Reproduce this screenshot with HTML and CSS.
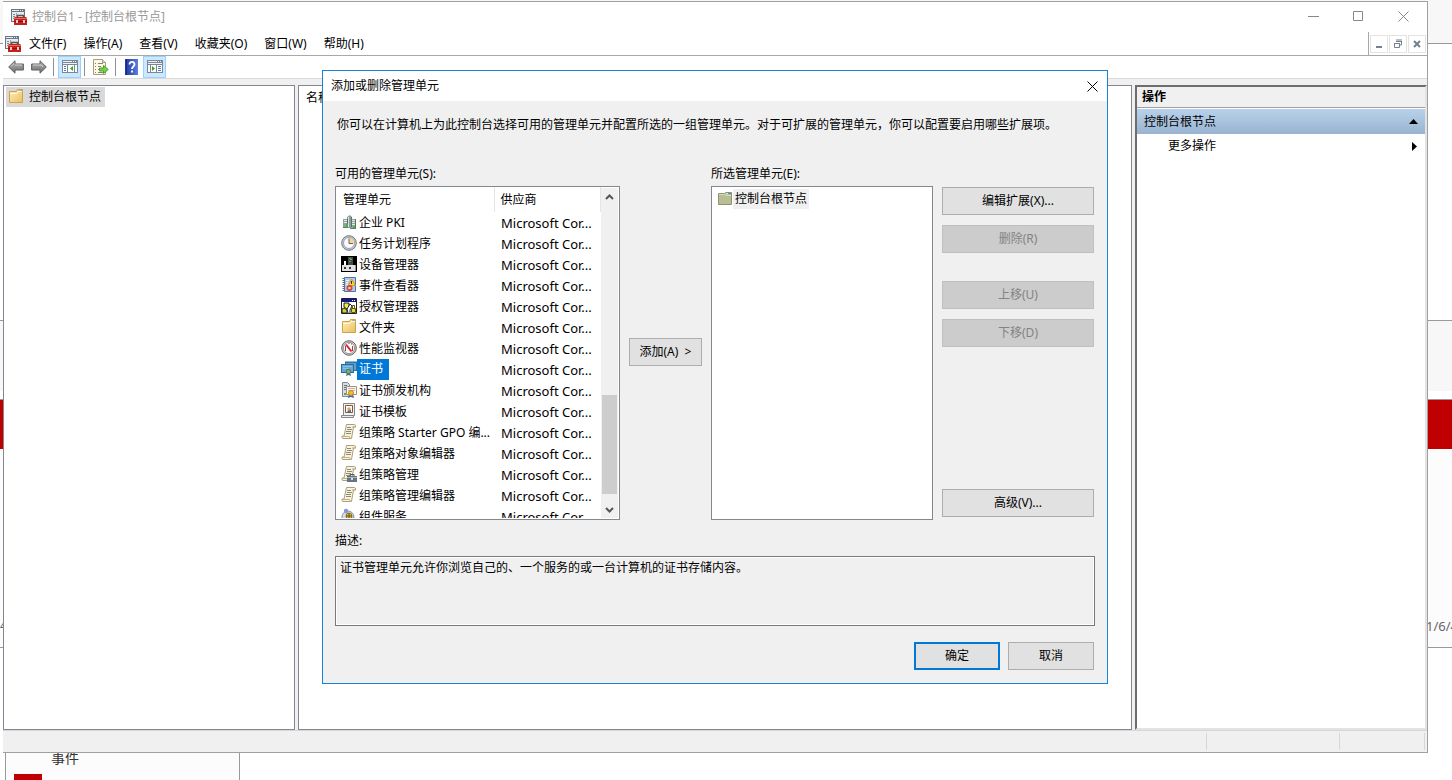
FILE: index.html
```
<!DOCTYPE html>
<html lang="zh-CN">
    <head>
        <title>控制台1 - [控制台根节点]</title>
        <meta charset="UTF-8">
        <meta name="viewport" content="width=device-width, initial-scale=1.0">
        <link rel="stylesheet" href="styles.css">
    </head>
    <body>
        <!-- icon set -->
        <svg class="defs" width="0" height="0">
            <defs>
                <linearGradient id="gFolder" x1="0" y1="0" x2="1" y2="1">
                    <stop offset="0" stop-color="#fff0b8"/><stop offset="1" stop-color="#e8bf63"/>
                </linearGradient>
                <linearGradient id="gArrow" x1="0" y1="0" x2="0" y2="1">
                    <stop offset="0" stop-color="#b5b5b5"/><stop offset="1" stop-color="#6e6e6e"/>
                </linearGradient>
                <linearGradient id="gHelp" x1="0" y1="0" x2="1" y2="0">
                    <stop offset="0" stop-color="#23379b"/><stop offset="1" stop-color="#5b7de0"/>
                </linearGradient>
            </defs>
            <symbol id="mmc" viewBox="0 0 16 16">
                <path d="M0 0h14v13H0z" fill="#6c7783"/><path d="M1 4h12v8H1z" fill="#e6e9ee"/>
                <path d="M1 1.500h7M9 1.500h1M11 1.500h1M1 3.500h12" stroke="#e8edf2"/>
                <path d="M2 5.500h2M2 7.500h2M2 9.500h1" stroke="#7b8794"/><path d="M5.500 4v5" stroke="#9aa4ae"/>
                <path d="M6.500 9V6.500h6V9" fill="none" stroke="#555" stroke-width="1.500"/>
                <path d="M3 9l1-1h11l1 1v7H3z" fill="#c7211d"/>
                <path d="M3 9.500h13" stroke="#ea6a5b"/><path d="M3 12.500h13" stroke="#8f1110"/>
                <path d="M5 11h2v3H5zM12 11h2v3h-2z" fill="#f1d0ca"/>
            </symbol>
            <symbol id="folder" viewBox="0 0 16 16">
                <path d="M1.500 2.500h7l1-2h5v13h-13z" fill="url(#gFolder)" stroke="#cfa14b"/>
                <path d="M2 4.500h7l1-2h4" fill="none" stroke="#fff7d6"/><path d="M11 1.500h3" stroke="#8fb4d6"/>
            </symbol>
            <symbol id="folder-green" viewBox="0 0 16 16">
                <path d="M1.500 2.500h6l1-1h6v12h-13z" fill="#b9bd93" stroke="#8b9572"/>
                <path d="M2 3.500h6l1 1h5" fill="none" stroke="#d5dab8"/><path d="M9 2.500h2" stroke="#dfeaf2"/><path d="M11 2.500h3" stroke="#3d8fe0"/>
            </symbol>
            <symbol id="back" viewBox="0 0 16 14">
                <path d="M.7 7 7 .8V4h8.400v6H7v3.200z" fill="url(#gArrow)" stroke="#606060"/><path d="M3 6.500l3-3M7 5h7" stroke="#d2d2d2" fill="none"/>
            </symbol>
            <symbol id="forward" viewBox="0 0 16 14">
                <path d="M15.300 7 9 .8V4H.6v6H9v3.200z" fill="url(#gArrow)" stroke="#606060"/><path d="M2 5h8l2 2" stroke="#d2d2d2" fill="none"/>
            </symbol>
            <symbol id="tree-on" viewBox="0 0 16 14">
                <path d="M0 0h16v13H0z" fill="#7b8794"/><path d="M1 5h4v7H1zM6 5h6v7H6zM13 5h2v7h-2z" fill="#fff"/>
                <path d="M1 1.500h9M11 1.500h1M13 1.500h1M1 3.500h14" stroke="#eef2f6"/>
                <path d="M2 6.500h2M2 8.500h2M2 10.500h2" stroke="#507ba8"/>
                <path d="M11 6v5L8 8.500z" fill="#36a820"/>
            </symbol>
            <symbol id="pane-on" viewBox="0 0 16 14">
                <path d="M0 0h16v13H0z" fill="#7b8794"/><path d="M1 5h2v7H1zM4 5h5v7H4zM10 5h5v7h-5z" fill="#fff"/>
                <path d="M1 1.500h9M11 1.500h1M13 1.500h1M1 3.500h14" stroke="#eef2f6"/>
                <path d="M11 6.500h3M11 8.500h3M11 10.500h3" stroke="#507ba8"/>
                <path d="M5 6v5l3-2.500z" fill="#36a820"/>
            </symbol>
            <symbol id="export" viewBox="0 0 16 16">
                <path d="M.5.5h9l3 3v12H.5z" fill="#fdf8de" stroke="#a79c77"/><path d="M9.500.5v3h3" fill="#e8dcae" stroke="#a79c77"/>
                <path d="M5 4.500h5M5 7.500h3M5 10.500h2M5 13.500h5M2 4.500h1M2 7.500h1M2 10.500h1M2 13.500h1" stroke="#807ab0"/>
                <path d="M6.500 9h4V6.500L15.300 10.500l-4.800 4V12h-4z" fill="#74d04b" stroke="#48a62d"/>
            </symbol>
            <symbol id="help" viewBox="0 0 13 16">
                <path d="M0 0h13v16H0z" fill="url(#gHelp)"/><path d="M1.500 0v16" stroke="#1a2b83"/>
                <path d="M4.500 5.500c0-3.500 5-3.500 5 0 0 2-2.500 2-2.500 4.500M7 11.500v2" fill="none" stroke="#fff" stroke-width="1.800"/>
            </symbol>
            <symbol id="pki" viewBox="0 0 16 16">
                <path d="M6 3l3-2 2 2v11H6z" fill="#8c9e9e"/><path d="M7.500 3v10" stroke="#d7e1df"/>
                <path d="M2 5h5v9l-5-1z" fill="#8fa29d"/><path d="M10 5h5v10l-5-1z" fill="#93a5a0"/>
                <path d="M3 6.500h3M3 8.500h3M11 6.500h3M11 8.500h3M11 10.500h3" stroke="#e2ebe8"/>
                <path d="M6.500 5v9M14.500 5v9M10.500 3v10" stroke="#5e6f6b"/><path d="M5 10h2v3H5zM12 12h2v2h-2z" fill="#3fbf2c"/><path d="M2 13.500h5M9 14.500h6" stroke="#687975"/>
            </symbol>
            <symbol id="clock" viewBox="0 0 16 16">
                <circle cx="8" cy="8" r="7.300" fill="#c3c7cc" stroke="#747981"/><circle cx="8" cy="8" r="5.500" fill="#f7faff" stroke="#9da6af"/>
                <path d="M8 3a5 5 0 0 1 5 5H8z" fill="#f9d391"/><path d="M8 3.500V8.500h4" fill="none" stroke="#6a6259"/>
            </symbol>
            <symbol id="device" viewBox="0 0 16 16">
                <path d="M0 0h16v16H0z" fill="#000"/><path d="M7 1h5v8H7z" fill="#4a4a4a"/><path d="M8 2h2v1H8zM8 5h2v1H8z" fill="#888"/><path d="M9 3h2v1H9z" fill="#32d532"/>
                <path d="M3 5h2v4H3z" fill="#fff"/><path d="M1 9h14v6H1z" fill="#e2e2e2"/><path d="M3 11h2v2H3zM8 11h2v2H8z" fill="#333"/><path d="M14 9h1v6h-1z" fill="#999"/>
            </symbol>
            <symbol id="event" viewBox="0 0 16 16">
                <path d="M3.500.5h11v14h-11z" fill="#b3c9e4" stroke="#4d74a8"/><path d="M2.500 1v13" stroke="#5b6b7c" stroke-width="2" stroke-dasharray="1 1"/>
                <path d="M5 3.500h3M5 5.500h2M5 7.500h2" stroke="#eef5fc"/><path d="M10.500 2l4 6.500h-7z" fill="#ffd531" stroke="#d09d17"/><path d="M10.500 4v3" stroke="#333"/>
                <circle cx="8.500" cy="11" r="3" fill="#d9463c"/><path d="M7.500 10l2 2m0-2l-2 2" stroke="#fff"/>
            </symbol>
            <symbol id="auth" viewBox="0 0 16 16">
                <path d="M.5.5h15v15H.5z" fill="#fff" stroke="#222"/><path d="M1 1h14v3H1z" fill="#15158c"/><path d="M11 2.500h1M13 2.500h1" stroke="#fff"/>
                <path d="M3 5h5v5l-2 1-3-2z" fill="#f3ee3d" stroke="#222"/><path d="M1 15v-4l2-1 3 2v3z" fill="#d4cf28" stroke="#222"/>
                <path d="M7 15l-1-4 3-5 2 2-2 4v3" fill="#fff" stroke="#222"/><path d="M10.500 10.500h4v4h-4z" fill="#e3d926" stroke="#59590c"/><path d="M11.500 10V7.500h2V10" fill="none" stroke="#59590c"/>
            </symbol>
            <symbol id="gauge" viewBox="0 0 16 16">
                <circle cx="8" cy="8" r="7.300" fill="#c9c9c9" stroke="#686868"/><circle cx="8" cy="8" r="5.600" fill="#fff" stroke="#999"/>
                <path d="M4.500 11V6M11.500 11V6M8 4V3M10 4h1" stroke="#9e3f49"/><path d="M5 4.500l5.500 7" stroke="#dc202c" stroke-width="2"/>
            </symbol>
            <symbol id="cert" viewBox="0 0 16 16">
                <path d="M4 .5h12V10H4z" fill="#2f739f"/><path d="M5 2h10v7H5z" fill="#5a9fd0"/>
                <path d="M0 3h13v9H0z" fill="#2b6b99"/><path d="M1 4h11v7H1z" fill="#61a7d8"/>
                <path d="M2 5.500h9M2 7.500h6" stroke="#88c1e8"/><path d="M6 11l-1 4 2.500-1 2.500 1-1-4" fill="#2f789c"/><circle cx="7.500" cy="10.500" r="2.300" fill="#8ca06a" stroke="#4f7660"/>
            </symbol>
            <symbol id="ca" viewBox="0 0 16 16">
                <path d="M1.500.5h5l2 2v12h-7z" fill="#d6dce0" stroke="#7f898f"/><path d="M3 3.500h3M3 5.500h3M3 7.500h2" stroke="#657178"/><path d="M3 11h2v2H3z" fill="#49ad42"/>
                <path d="M5.500 4.500h10v8h-10z" fill="#fff8ea" stroke="#a98c7a"/><path d="M7 6.500h7M7 8.500h7" stroke="#b6b6b6"/><path d="M8 12l-1 4 3-1 3 1-1-4" fill="#396aad"/><circle cx="10" cy="11" r="2.500" fill="#f5bd2d" stroke="#c58a18"/>
            </symbol>
            <symbol id="template" viewBox="0 0 16 16">
                <path d="M2.500.5h11v12h-11z" fill="#f3f1ec" stroke="#8a8580"/><path d="M4.500 2.500h7v7h-7z" fill="#fff" stroke="#755b4e"/><path d="M.5 12.500h12v2H.5z" fill="#eee" stroke="#8a8580"/>
                <path d="M7 7l-1 3 2-1 2 1V7" fill="#41709f"/><circle cx="8" cy="6" r="1.800" fill="#eaa43a"/>
            </symbol>
            <symbol id="scroll" viewBox="0 0 16 16">
                <path d="M5.500.5h8q1.500 0 1 2.500h-2l-2 11.500H2Q.5 14.500 1 12h2z" fill="#faf3d9" stroke="#aaa07f"/>
                <path d="M11 3h3.500M1.500 12.500h7l1 2" fill="none" stroke="#c0b086"/>
                <path d="M6 3.500h4M6 5.500h5M5 7.500h5M5 9.500h5" stroke="#8d8a7b"/>
            </symbol>
            <symbol id="scroll-lock" viewBox="0 0 16 16">
                <use href="#scroll"/><path d="M6 10h10v6H6z" fill="#66747e"/><path d="M9 10V8.500h4V10" fill="none" stroke="#4b5962"/><path d="M6 11.500h10" stroke="#a8b7c0"/><path d="M10 12h2v2h-2z" fill="#d6dee3"/>
            </symbol>
            <symbol id="component" viewBox="0 0 16 16">
                <circle cx="7" cy="9" r="6" fill="#d5dbea" stroke="#8993ac"/><circle cx="5" cy="3" r="2.200" fill="#8993df"/><circle cx="12" cy="12" r="2.500" fill="#63ad51"/>
                <circle cx="8" cy="8" r="3" fill="#eaba37" stroke="#987320"/><path d="M8 5v6M5 8h6" stroke="#5e4e23"/>
            </symbol>
        </svg>

        <!-- page behind the console -->
        <div class="behind">
            <div class="band band-top"></div>
            <div class="band band-blank"></div>
            <div class="band band-grey"></div>
            <div class="band band-red"></div>
            <div class="band band-date"><span>4</span><span class="date">1/6/4</span></div>
            <div class="events"><span>事件</span><div class="events-mark"></div></div>
        </div>

        <div class="console">
            <div class="titlebar">
                <svg class="icon"><use href="#mmc"/></svg>
                <span class="caption">控制台1 - [控制台根节点]</span>
                <button class="sysbtn" aria-label="最小化"><svg width="11" height="11"><path d="M0 5.500h11"/></svg></button>
                <button class="sysbtn" aria-label="最大化"><svg width="11" height="11"><path d="M.5.5h9v9h-9z"/></svg></button>
                <button class="sysbtn" aria-label="关闭"><svg width="11" height="11"><path d="M.5.5l10 10M10.500.5l-10 10"/></svg></button>
            </div>
            <div class="menubar">
                <svg class="icon"><use href="#mmc"/></svg>
                <div class="menus">
                    <button>文件(F)</button>
                    <button>操作(A)</button>
                    <button>查看(V)</button>
                    <button>收藏夹(O)</button>
                    <button>窗口(W)</button>
                    <button>帮助(H)</button>
                </div>
                <div class="mdi">
                    <button aria-label="最小化"><svg width="10" height="10"><path d="M2 8h6" stroke-width="2"/></svg></button>
                    <button aria-label="还原"><svg width="10" height="10"><path d="M3 1h6M3 2.500h6M8.500 2v4H7M1 4.500h6M1.500 4v4.500h5V4" stroke-width="1"/></svg></button>
                    <button aria-label="关闭"><svg width="10" height="10"><path d="M2 2l6 6M8 2l-6 6" stroke-width="2"/></svg></button>
                </div>
            </div>
            <div class="toolbar">
                <button aria-label="后退"><svg width="16" height="14"><use href="#back"/></svg></button>
                <button aria-label="前进"><svg width="16" height="14"><use href="#forward"/></svg></button>
                <i class="sep"></i>
                <button class="pressed" aria-label="显示控制台树"><svg width="16" height="14"><use href="#tree-on"/></svg></button>
                <i class="sep"></i>
                <button aria-label="导出列表"><svg width="16" height="16"><use href="#export"/></svg></button>
                <i class="sep"></i>
                <button aria-label="帮助"><svg width="13" height="16"><use href="#help"/></svg></button>
                <button class="pressed" aria-label="显示操作窗格"><svg width="16" height="14"><use href="#pane-on"/></svg></button>
            </div>
            <div class="panes">
                <div class="pane tree">
                    <button class="node"><svg class="icon"><use href="#folder"/></svg><span>控制台根节点</span></button>
                </div>
                <div class="pane result">名称</div>
                <div class="pane actions">
                    <h2>操作</h2>
                    <button class="group"><span>控制台根节点</span><svg width="9" height="5"><path d="M0 5h9L4.500 0z"/></svg></button>
                    <button class="more"><span>更多操作</span><svg width="5" height="9"><path d="M0 0v9l5-4.500z"/></svg></button>
                </div>
            </div>
            <div class="statusbar"><span></span><span></span><span></span></div>
        </div>

        <div class="dialog" role="dialog" aria-labelledby="dlgTitle">
            <div class="dlg-title">
                <span id="dlgTitle">添加或删除管理单元</span>
                <button aria-label="关闭"><svg width="11" height="11"><path d="M.5.5l10 10M10.500.5l-10 10"/></svg></button>
            </div>
            <div class="dlg-body">
                <p class="intro">你可以在计算机上为此控制台选择可用的管理单元并配置所选的一组管理单元。对于可扩展的管理单元，你可以配置要启用哪些扩展项。</p>
                <div class="picker">
                    <div>
                        <div class="label" id="lblAvail">可用的管理单元(S):</div>
                        <div class="listbox">
                            <div class="rows">
                                <table aria-labelledby="lblAvail">
                                    <thead>
                                        <tr><th class="name">管理单元</th><th>供应商</th></tr>
                                    </thead>
                                    <tbody>
                                        <tr><td><svg class="icon"><use href="#pki"/></svg><span>企业 PKI</span></td><td>Microsoft Cor...</td></tr>
                                        <tr><td><svg class="icon"><use href="#clock"/></svg><span>任务计划程序</span></td><td>Microsoft Cor...</td></tr>
                                        <tr><td><svg class="icon"><use href="#device"/></svg><span>设备管理器</span></td><td>Microsoft Cor...</td></tr>
                                        <tr><td><svg class="icon"><use href="#event"/></svg><span>事件查看器</span></td><td>Microsoft Cor...</td></tr>
                                        <tr><td><svg class="icon"><use href="#auth"/></svg><span>授权管理器</span></td><td>Microsoft Cor...</td></tr>
                                        <tr><td><svg class="icon"><use href="#folder"/></svg><span>文件夹</span></td><td>Microsoft Cor...</td></tr>
                                        <tr><td><svg class="icon"><use href="#gauge"/></svg><span>性能监视器</span></td><td>Microsoft Cor...</td></tr>
                                        <tr class="selected"><td><svg class="icon"><use href="#cert"/></svg><span>证书</span></td><td>Microsoft Cor...</td></tr>
                                        <tr><td><svg class="icon"><use href="#ca"/></svg><span>证书颁发机构</span></td><td>Microsoft Cor...</td></tr>
                                        <tr><td><svg class="icon"><use href="#template"/></svg><span>证书模板</span></td><td>Microsoft Cor...</td></tr>
                                        <tr><td><svg class="icon"><use href="#scroll"/></svg><span>组策略 Starter GPO 编...</span></td><td>Microsoft Cor...</td></tr>
                                        <tr><td><svg class="icon"><use href="#scroll"/></svg><span>组策略对象编辑器</span></td><td>Microsoft Cor...</td></tr>
                                        <tr><td><svg class="icon"><use href="#scroll-lock"/></svg><span>组策略管理</span></td><td>Microsoft Cor...</td></tr>
                                        <tr><td><svg class="icon"><use href="#scroll"/></svg><span>组策略管理编辑器</span></td><td>Microsoft Cor...</td></tr>
                                        <tr><td><svg class="icon"><use href="#component"/></svg><span>组件服务</span></td><td>Microsoft Cor...</td></tr>
                                    </tbody>
                                </table>
                            </div>
                            <div class="scrollbar">
                                <svg width="9" height="6"><path d="M1 5l3.500-3.500L8 5"/></svg>
                                <div class="thumb"></div>
                                <svg width="9" height="6"><path d="M1 1l3.500 3.500L8 1"/></svg>
                            </div>
                        </div>
                    </div>
                    <button class="btn add">添加(A)&nbsp; &gt;</button>
                    <div>
                        <div class="label">所选管理单元(E):</div>
                        <div class="listbox chosen">
                            <div class="root"><svg class="icon"><use href="#folder-green"/></svg><span>控制台根节点</span></div>
                        </div>
                    </div>
                    <div class="side">
                        <button class="btn">编辑扩展(X)...</button>
                        <button class="btn" disabled>删除(R)</button>
                        <button class="btn move" disabled>上移(U)</button>
                        <button class="btn" disabled>下移(D)</button>
                        <button class="btn advanced">高级(V)...</button>
                    </div>
                </div>
                <label class="label desc-label" for="desc">描述:</label>
                <textarea id="desc" readonly>证书管理单元允许你浏览自己的、一个服务的或一台计算机的证书存储内容。</textarea>
                <div class="dlg-buttons">
                    <button class="btn default">确定</button>
                    <button class="btn">取消</button>
                </div>
            </div>
        </div>
    </body>
</html>
```
FILE: styles.css
```
* {
    box-sizing: border-box;
}
body {
    margin: 0;
    height: 100vh;
    overflow: hidden;
    position: relative;
    background: white;
    color: black;
    font: 12px/20px "Noto Sans", "Noto Sans CJK SC", sans-serif;
}
button, textarea {
    font: inherit;
    color: inherit;
    margin: 0;
    padding: 0;
    border: 0;
    background: none;
    white-space: nowrap;
}
svg {
    display: block;
    flex: none;
}
.defs {
    position: absolute;
}
.icon {
    width: 16px;
    height: 16px;
}

/* page behind */
.behind {
    position: absolute;
    inset: 0;
    overflow: hidden;
}
.band {
    border-bottom: 1px solid #999;
}
.band-top {
    height: 44px;
    background: #f7f7f7;
}
.band-blank {
    height: 277px;
}
.band-grey {
    height: 79px;
    background: #f7f7f7;
    box-shadow: inset 0 -8px white;
}
.band-red {
    height: 49px;
    background: #c00000;
    border: 0;
}
.band-date {
    height: 199px;
    padding-bottom: 11px;
    display: flex;
    justify-content: space-between;
    align-items: flex-end;
    background: #fcfcfc;
    color: #666;
}
.date {
    width: 26px;
    font-size: 13px;
}
.events {
    margin-left: 5px;
    width: 235px;
    height: 140px;
    padding: 100px 8px 0;
    border: 1px solid #999;
    border-width: 0 1px;
    background: #fcfcfc;
    font-size: 14px;
    color: #333;
}
.events span {
    margin-left: 37px;
}
.events-mark {
    width: 28px;
    height: 20px;
    margin-top: 6px;
    background: #c00000;
}

/* console window */
.console {
    position: absolute;
    inset: 1px 24px 27px 3px;
    display: flex;
    flex-direction: column;
    background: #f0f0f0;
    border: 1px solid #a0a0a0;
    border-left: 0;
}
.titlebar {
    height: 30px;
    display: flex;
    align-items: center;
    padding: 0 1px 1px 8px;
    background: white;
    color: #999;
}
.caption {
    flex: 1;
    margin-left: 5px;
}
.sysbtn {
    width: 45px;
    height: 29px;
    display: grid;
    place-items: center;
}
.sysbtn path {
    fill: none;
    stroke: #888;
}
.menubar {
    height: 24px;
    display: flex;
    align-items: center;
    padding-left: 2px;
    background: white;
    border-bottom: 1px solid #a8a8a8;
}
.menus {
    display: flex;
    gap: 17px;
    margin-left: 8px;
}
.mdi {
    align-self: stretch;
    margin-left: auto;
    padding: 3px 1px;
    display: flex;
    gap: 1px;
    border-left: 1px solid #a8a8a8;
}
.mdi button {
    width: 18px;
    height: 18px;
    display: grid;
    place-items: center;
    border: 1px solid #e3e3e3;
}
.mdi path {
    fill: none;
    stroke: #75818f;
}
.toolbar {
    height: 23px;
    display: flex;
    align-items: center;
    padding-left: 1px;
    background: white;
    border-bottom: 1px solid #d9d9d9;
}
.toolbar button {
    width: 23px;
    height: 22px;
    display: grid;
    place-items: center;
}
.toolbar .pressed {
    background: #cce8ff;
    border: 1px solid #99d1ff;
}
.sep {
    width: 1px;
    height: 18px;
    margin: 0 4px 0 3px;
    background: #909090;
}
.panes {
    flex: 1;
    min-height: 0;
    padding: 6px 0 0;
    display: grid;
    grid-template-columns: 292px 1fr 292px;
    gap: 3px;
}
.pane {
    background: white;
    border: 1px solid #828790;
}
.tree {
    padding: 1px 2px;
}
.node {
    height: 20px;
    padding: 0 4px 0 2px;
    display: flex;
    align-items: center;
    gap: 5px;
    background: #d9d9d9;
}
.result {
    padding: 2px 7px;
}
.actions {
    border: 2px solid #6d6d6d;
    border-right: 2px solid #e3e3e3;
    border-bottom: 2px solid #e3e3e3;
}
.actions h2 {
    height: 21px;
    margin: 0 0 1px;
    padding-left: 5px;
    font-size: 12px;
    line-height: 20px;
    background: #f0f0f0;
    border-bottom: 1px solid #a0a0a0;
}
.group, .more {
    width: 100%;
    height: 25px;
    display: flex;
    align-items: center;
    justify-content: space-between;
    padding: 0 7px 0 7px;
}
.group {
    background: linear-gradient(#b9d1ea, #99b4d1);
}
.more {
    height: 24px;
    padding: 0 8px 0 31px;
}
.statusbar {
    height: 22px;
    padding: 2px 2px 2px 0;
    display: flex;
    border-top: 1px solid #d7d7d7;
}
.statusbar span {
    border-right: 1px solid #d7d7d7;
    width: 85px;
}
.statusbar span:first-child {
    flex: 1;
}
.statusbar span:nth-child(2) {
    width: 133px;
}

/* add / remove snap-ins dialog */
.dialog {
    position: absolute;
    top: 70px;
    left: 322px;
    right: 344px;
    background: #f0f0f0;
    border: 1px solid #1883d7;
}
.dlg-title {
    height: 30px;
    display: flex;
    align-items: center;
    justify-content: space-between;
    padding-left: 8px;
    background: white;
}
.dlg-title button {
    width: 30px;
    height: 28px;
    display: grid;
    place-items: center;
}
.dlg-title path {
    fill: none;
    stroke: black;
}
.dlg-body {
    padding: 14px 12px 13px;
}
.intro {
    margin: 0 0 29px 2px;
}
.label {
    display: block;
    height: 22px;
}
.picker {
    display: grid;
    grid-template-columns: 285fr 73px 222fr 153px;
    gap: 9px;
}
.listbox {
    height: 334px;
    display: flex;
    background: white;
    border: 1px solid #828790;
}
.rows {
    flex: 1;
    min-width: 0;
    margin-bottom: 1px;
    overflow: hidden;
}
.rows .icon {
    margin-bottom: 1px;
}
table {
    width: 100%;
    table-layout: fixed;
    border-collapse: collapse;
}
th {
    height: 25px;
    padding: 0 0 0 6px;
    font-weight: normal;
    text-align: left;
    border-right: 1px solid #e5e5e5;
}
th.name {
    width: 158px;
    padding-left: 7px;
}
td {
    height: 21px;
    padding: 0 0 0 7px;
    font-size: 13px;
    white-space: nowrap;
}
td:first-child {
    display: flex;
    align-items: center;
    padding-left: 5px;
    font-size: 12px;
}
td span {
    padding: 0 2px;
}
.selected span {
    height: 21px;
    padding-right: 6px;
    background: #0078d7;
    color: white;
}
.scrollbar {
    width: 17px;
    margin: 1px 1px 1px 0;
    padding: 6px 0 5px;
    display: flex;
    flex-direction: column;
    align-items: center;
    background: #f0f0f0;
}
.scrollbar path {
    fill: none;
    stroke: #555;
    stroke-width: 2;
}
.thumb {
    width: 15px;
    height: 99px;
    margin: auto 0 13px;
    background: #cdcdcd;
}
.chosen {
    padding: 1px 5px;
}
.root {
    height: 21px;
    display: flex;
    align-items: center;
}
.root span {
    padding: 0 2px;
    background: #f0f0f0;
}
.btn {
    height: 28px;
    background: #e1e1e1;
    border: 1px solid #adadad;
}
.btn:disabled {
    background: #ccc;
    border-color: #bfbfbf;
    color: #838383;
}
.add {
    margin-top: 174px;
}
.side {
    padding: 23px 1px 3px 0;
    display: flex;
    flex-direction: column;
    gap: 10px;
}
.move {
    margin-top: 18px;
}
.advanced {
    margin-top: auto;
}
.desc-label {
    margin-top: 11px;
    height: 25px;
}
textarea {
    display: block;
    width: 100%;
    height: 70px;
    padding: 1px 4px;
    resize: none;
    outline: none;
    white-space: normal;
    background: #f0f0f0;
    border: 1px solid #7a7a7a;
    box-shadow: inset 0 0 0 1px white;
}
.dlg-buttons {
    margin: 16px 1px 0 0;
    display: flex;
    justify-content: flex-end;
    gap: 8px;
}
.dlg-buttons .btn {
    width: 86px;
}
.default {
    border: 2px solid #0078d7;
}
```
